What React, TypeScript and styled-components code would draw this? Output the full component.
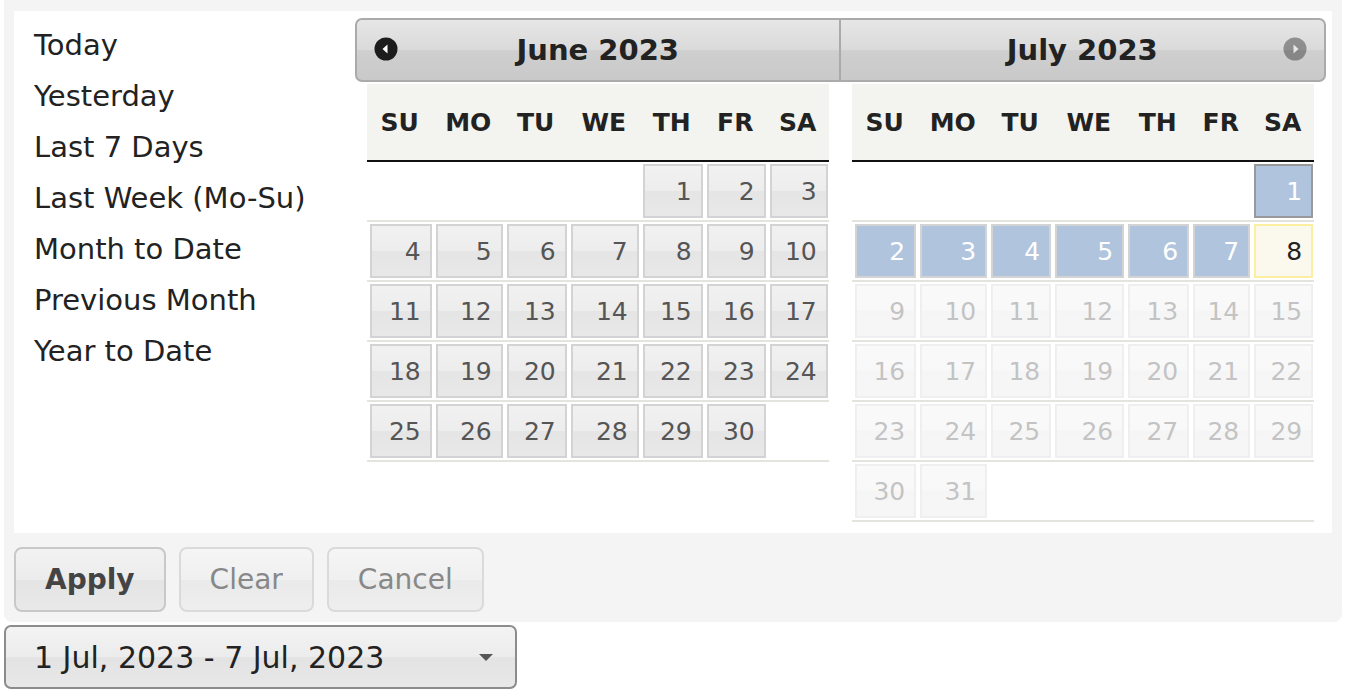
import React from 'react';
import styled, { createGlobalStyle, css } from 'styled-components';

const GlobalStyle = createGlobalStyle`
  body {
    margin: 0;
    background: #fff;
    font-family: "DejaVu Sans", Verdana, sans-serif;
  }
`;

const Page = styled.div`
  padding-left: 4px;
  width: 1338px;
`;

const Popup = styled.div`
  background: #f4f4f4;
  border-radius: 0 0 8px 8px;
  padding: 11px 10px 10px;
`;

const Panel = styled.div`
  display: flex;
  height: 522px;
  box-sizing: border-box;
  padding: 7px 6px 0 0;
  background: #fff;
`;

const Presets = styled.ul`
  list-style: none;
  margin: 0;
  padding: 2px 0 0 20px;
  width: 341px;
  box-sizing: border-box;
  flex-shrink: 0;
`;

const Preset = styled.li`
  font-size: 29px;
  line-height: 51px;
  color: #222;
  white-space: nowrap;
`;

const Calendars = styled.div`
  flex: 1;
  display: flex;
`;

const Month = styled.div`
  flex: 1;
`;

const MonthHeader = styled.div<{ $side: 'left' | 'right' }>`
  display: grid;
  grid-template-columns: 58px 1fr 58px;
  align-items: center;
  height: 64px;
  box-sizing: border-box;
  border: 2px solid #aaa;
  background: linear-gradient(#e6e6e6, #dadada 50%, #cfcfcf 51%, #c9c9c9);
  ${p =>
    p.$side === 'left'
      ? css`
          border-radius: 7px 0 0 7px;
        `
      : css`
          border-left: none;
          border-radius: 0 7px 7px 0;
        `}
`;

const Title = styled.div`
  grid-column: 2;
  text-align: center;
  font-size: 29px;
  font-weight: bold;
  color: #222;
`;

const Nav = styled.div<{ $dim?: boolean }>`
  display: flex;
  justify-content: center;
  padding-bottom: 3px;
  opacity: ${p => (p.$dim ? 0.4 : 1)};
`;

const DayTable = styled.table`
  width: 462px;
  margin: 2px auto 0;
  border-collapse: separate;
  border-spacing: 0;
  table-layout: fixed;
`;

const DayName = styled.th`
  height: 76px;
  padding: 0;
  background: #f3f3ef;
  border-bottom: 2px solid #111;
  font-size: 25px;
  font-weight: bold;
  color: #222;
  text-align: center;
`;

const DayTd = styled.td`
  padding: 2px 1px 2px 3px;
  border-bottom: 2px solid #e4e4de;
`;

type DayKind = 'default' | 'selected' | 'active' | 'today' | 'disabled';

const Day = styled.span<{ $kind: DayKind }>`
  display: block;
  height: 54px;
  box-sizing: border-box;
  border: 2px solid #d3d3d3;
  padding-right: 9px;
  line-height: 52px;
  text-align: right;
  font-size: 25px;
  color: #555;
  background: linear-gradient(#f1f1f1, #ededed 50%, #e5e5e5 51%, #e8e8e8);
  ${p =>
    p.$kind === 'selected' &&
    css`
      background: #b0c4de;
      border-color: #d3d3d3;
      color: #fff;
    `}
  ${p =>
    p.$kind === 'active' &&
    css`
      background: #b0c4de;
      border-color: #999;
      color: #fff;
    `}
  ${p =>
    p.$kind === 'today' &&
    css`
      background: #fbf9ee;
      border-color: #fcefa1;
      color: #222;
    `}
  ${p =>
    p.$kind === 'disabled' &&
    css`
      opacity: 0.35;
    `}
`;

const ButtonBar = styled.div`
  display: flex;
  gap: 13px;
  margin-top: 14px;
`;

const Button = styled.button<{ $primary?: boolean }>`
  height: 65px;
  padding: 0 29px;
  border: 2px solid ${p => (p.$primary ? '#c8c8c8' : '#dadada')};
  border-radius: 8px;
  background: ${p =>
    p.$primary
      ? 'linear-gradient(#f2f2f2, #ececec 50%, #e4e4e4 51%, #e9e9e9)'
      : 'linear-gradient(#f5f5f5, #f0f0f0 50%, #eaeaea 51%, #eeeeee)'};
  font-family: "DejaVu Sans", Verdana, sans-serif;
  font-size: 28px;
  font-weight: ${p => (p.$primary ? 'bold' : 'normal')};
  color: ${p => (p.$primary ? '#444' : '#888')};
  cursor: pointer;
`;

const RangeButton = styled.button`
  display: flex;
  align-items: center;
  justify-content: space-between;
  width: 513px;
  height: 64px;
  margin-top: 3px;
  padding: 0 22px 0 28px;
  box-sizing: border-box;
  border: 2px solid #8c8c8c;
  border-radius: 7px;
  background: linear-gradient(#f3f3f3, #ececec 50%, #e3e3e3 51%, #e8e8e8);
  font-family: "DejaVu Sans", Verdana, sans-serif;
  font-size: 30px;
  color: #222;
  cursor: pointer;
`;

const Caret = styled.span`
  width: 0;
  height: 0;
  border-left: 7px solid transparent;
  border-right: 7px solid transparent;
  border-top: 7px solid #555;
`;

const CircleArrow: React.FC<{ dir: 'left' | 'right' }> = ({ dir }) => (
  <svg width="24" height="24" viewBox="0 0 24 24">
    <circle cx="12" cy="12" r="11.5" fill="#1c1c1c" />
    {dir === 'left' ? (
      <path d="M13.5 7.5 L8.5 12 L13.5 16.5 Z" fill="#fff" />
    ) : (
      <path d="M10.5 7.5 L15.5 12 L10.5 16.5 Z" fill="#fff" />
    )}
  </svg>
);

const dayNames = ['SU', 'MO', 'TU', 'WE', 'TH', 'FR', 'SA'];

type Cell = { n: number; kind: DayKind } | null;

const buildWeeks = (offset: number, days: number, kindOf: (n: number) => DayKind): Cell[][] => {
  const cells: Cell[] = [];
  for (let i = 0; i < offset; i++) cells.push(null);
  for (let n = 1; n <= days; n++) cells.push({ n, kind: kindOf(n) });
  while (cells.length % 7) cells.push(null);
  const weeks: Cell[][] = [];
  for (let i = 0; i < cells.length; i += 7) weeks.push(cells.slice(i, i + 7));
  return weeks;
};

const june = buildWeeks(4, 30, () => 'default');
const july = buildWeeks(6, 31, n => {
  if (n === 1) return 'active';
  if (n <= 7) return 'selected';
  if (n === 8) return 'today';
  return 'disabled';
});

const MonthTable: React.FC<{ weeks: Cell[][]; widths: number[] }> = ({ weeks, widths }) => (
  <DayTable>
    <colgroup>
      {widths.map((w, i) => (
        <col key={i} style={{ width: w }} />
      ))}
    </colgroup>
    <thead>
      <tr>
        {dayNames.map(d => (
          <DayName key={d}>{d}</DayName>
        ))}
      </tr>
    </thead>
    <tbody>
      {weeks.map((week, wi) => (
        <tr key={wi}>
          {week.map((c, ci) => (
            <DayTd key={ci}>{c && <Day $kind={c.kind}>{c.n}</Day>}</DayTd>
          ))}
        </tr>
      ))}
    </tbody>
  </DayTable>
);

const presets = [
  'Today',
  'Yesterday',
  'Last 7 Days',
  'Last Week (Mo-Su)',
  'Month to Date',
  'Previous Month',
  'Year to Date',
];

export default function App() {
  return (
    <Page>
      <GlobalStyle />
      <Popup>
        <Panel>
          <Presets>
            {presets.map(p => (
              <Preset key={p}>{p}</Preset>
            ))}
          </Presets>
          <Calendars>
            <Month>
              <MonthHeader $side="left">
                <Nav>
                  <CircleArrow dir="left" />
                </Nav>
                <Title>June 2023</Title>
              </MonthHeader>
              <MonthTable weeks={june} widths={[66, 71, 64, 72, 64, 63, 62]} />
            </Month>
            <Month>
              <MonthHeader $side="right">
                <Title>July 2023</Title>
                <Nav $dim>
                  <CircleArrow dir="right" />
                </Nav>
              </MonthHeader>
              <MonthTable weeks={july} widths={[65, 71, 64, 73, 65, 61, 63]} />
            </Month>
          </Calendars>
        </Panel>
        <ButtonBar>
          <Button $primary>Apply</Button>
          <Button>Clear</Button>
          <Button>Cancel</Button>
        </ButtonBar>
      </Popup>
      <RangeButton>
        <span>1 Jul, 2023 - 7 Jul, 2023</span>
        <Caret />
      </RangeButton>
    </Page>
  );
}
